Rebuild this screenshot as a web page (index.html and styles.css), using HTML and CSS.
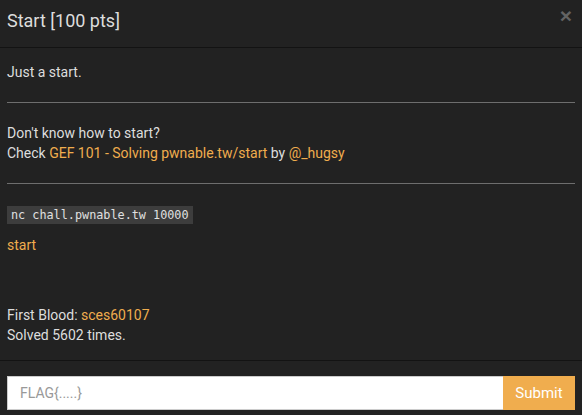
FILE: index.html
```html
<!DOCTYPE html>
<html>
<head>
<meta charset="utf-8">
<link rel="stylesheet" href="styles.css">
</head>
<body>
<div class="modal">
  <div class="modal-header">
    <h4 class="modal-title">Start [100 pts]</h4>
    <button class="close" type="button">×</button>
  </div>
  <div class="modal-body">
    <p>Just a start.</p>
    <hr>
    <p>Don't know how to start?<br>Check <a href="#">GEF 101 - Solving pwnable.tw/start</a> by <a href="#">@_hugsy</a></p>
    <hr>
    <p><code>nc chall.pwnable.tw 10000</code></p>
    <p><a href="#">start</a></p>
    <div class="stats">
      <p class="stat">First Blood: <a href="#">sces60107</a></p>
      <p class="stat">Solved 5602 times.</p>
    </div>
  </div>
  <div class="modal-footer">
    <form class="input-group">
      <input class="form-control" type="text" placeholder="FLAG{.....}">
      <button class="btn" type="button">Submit</button>
    </form>
  </div>
</div>
</body>
</html>
```
FILE: styles.css
```css
* { box-sizing: border-box; }
html, body {
  margin: 0;
  background: #222222;
}
body {
  font-family: Roboto, "Liberation Sans", sans-serif;
  font-size: 14px;
  line-height: 20px;
  color: #dddddd;
}
a {
  color: #f0ad4e;
  text-decoration: none;
}
.modal {
  width: 582px;
}
.modal-header {
  display: flex;
  align-items: flex-start;
  justify-content: space-between;
  padding: 8px 7px 13px 7px;
  border-bottom: 1px solid #131313;
}
.modal-title {
  margin: 0;
  font-size: 18px;
  line-height: 26px;
  font-weight: 400;
  color: #dddddd;
}
.close {
  background: none;
  border: 0;
  padding: 0;
  margin: -3px 3px 0 0;
  font-family: "Liberation Sans", sans-serif;
  font-size: 21px;
  line-height: 21px;
  font-weight: 700;
  color: #636363;
}
.modal-body {
  padding: 14px 7px 15px 7px;
}
p {
  margin: 0 0 10px 0;
}
hr {
  margin: 20px 0;
  border: 0;
  border-top: 1px solid #6e6e6e;
  height: 0;
}
code {
  font-family: "DejaVu Sans Mono", "Liberation Mono", monospace;
  font-size: 11.8px;
  padding: 2px 4px;
  background: #3d3d3d;
  color: #e0e0e0;
}
.stats {
  padding-top: 40px;
}
.stat {
  margin: 0;
}
.modal-footer {
  border-top: 1px solid #131313;
  padding: 15px 7px;
}
.input-group {
  display: flex;
  margin: 0;
}
.form-control {
  flex: 1;
  height: 34px;
  border: 1px solid #cccccc;
  border-right: 0;
  background: #ffffff;
  padding: 6px 12px;
  font-family: Roboto, "Liberation Sans", sans-serif;
  font-size: 14px;
  color: #555;
  outline: none;
}
.form-control::placeholder {
  color: #999999;
}
.btn {
  width: 72px;
  height: 34px;
  border: 0;
  background: #f0ad4e;
  color: #ffffff;
  font-family: Roboto, "Liberation Sans", sans-serif;
  font-size: 15px;
  padding: 0;
}
```
